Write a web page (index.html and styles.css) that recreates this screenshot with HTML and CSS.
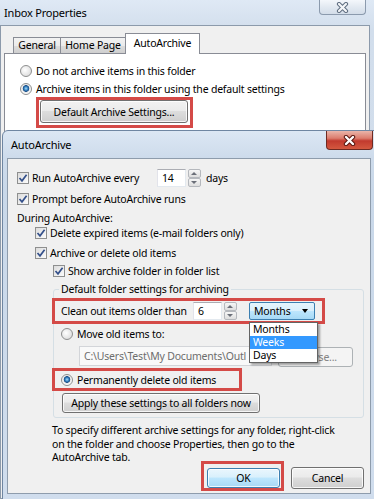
FILE: index.html
```html
<!DOCTYPE html>
<html lang="en">
<head>
	<meta charset="UTF-8">
	<title>AutoArchive</title>
	<link rel="stylesheet" href="styles.css">
</head>
<body>
	<div id="screen">
		<!-- Inbox Properties, behind -->
		<div class="win back">
			<div class="titlebar">
				<span class="title">Inbox Properties</span>
				<span class="close close-off">
					<svg width="13" height="11" viewBox="0 0 13 11"><path d="M3 2 L10 9 M10 2 L3 9" stroke="#5f6e80" stroke-width="4.2" stroke-linecap="round"/><path d="M3 2 L10 9 M10 2 L3 9" stroke="#f4f6f9" stroke-width="2.2" stroke-linecap="round"/></svg>
				</span>
			</div>
			<div class="client">
				<div class="tabs">
					<span class="tab tab-general">General</span>
					<span class="tab tab-home">Home Page</span>
					<span class="tab on">AutoArchive</span>
				</div>
				<div class="panel">
					<div class="row"><i class="radio"></i>Do not archive items in this folder</div>
					<div class="row mt4"><i class="radio on"></i>Archive items in this folder using the default settings</div>
					<div class="mark mark-default"><span class="btn btn-default">Default Archive Settings...</span></div>
				</div>
			</div>
		</div>

		<!-- AutoArchive dialog, in front -->
		<div class="win front">
			<div class="titlebar">
				<span class="title">AutoArchive</span>
				<span class="close close-red">
					<svg width="13" height="11" viewBox="0 0 13 11"><path d="M3 2 L10 9 M10 2 L3 9" stroke="#5a1710" stroke-width="4.4" stroke-linecap="round"/><path d="M3 2 L10 9 M10 2 L3 9" stroke="#ffffff" stroke-width="2.4" stroke-linecap="round"/></svg>
				</span>
			</div>
			<div class="client">
				<div class="row">
					<i class="check"><svg width="10" height="10" viewBox="0 0 10 10"><path d="M1.5 5 L4 7.8 L8.6 1.8" fill="none" stroke="#34508a" stroke-width="1.7"/></svg></i>
					<span class="lbl-run">Run AutoArchive every</span>
					<span class="field field-num">14</span>
					<span class="spin"><i class="up"></i><i class="dn"></i></span>
					<span class="unit">days</span>
				</div>
				<div class="row mt7">
					<i class="check"><svg width="10" height="10" viewBox="0 0 10 10"><path d="M1.5 5 L4 7.8 L8.6 1.8" fill="none" stroke="#34508a" stroke-width="1.7"/></svg></i>
					Prompt before AutoArchive runs
				</div>
				<div class="row mt5">During AutoArchive:</div>
				<div class="row mt1 in1">
					<i class="check"><svg width="10" height="10" viewBox="0 0 10 10"><path d="M1.5 5 L4 7.8 L8.6 1.8" fill="none" stroke="#34508a" stroke-width="1.7"/></svg></i>
					Delete expired items (e-mail folders only)
				</div>
				<div class="row mt6 in1">
					<i class="check"><svg width="10" height="10" viewBox="0 0 10 10"><path d="M1.5 5 L4 7.8 L8.6 1.8" fill="none" stroke="#34508a" stroke-width="1.7"/></svg></i>
					Archive or delete old items
				</div>
				<div class="row mt4 in2">
					<i class="check"><svg width="10" height="10" viewBox="0 0 10 10"><path d="M1.5 5 L4 7.8 L8.6 1.8" fill="none" stroke="#34508a" stroke-width="1.7"/></svg></i>
					Show archive folder in folder list
				</div>

				<fieldset class="group">
					<legend>Default folder settings for archiving</legend>
					<div class="mark mark-clean">
						<span class="lbl-clean">Clean out items older than</span>
						<span class="field field-num">6</span>
						<span class="spin"><i class="up"></i><i class="dn"></i></span>
						<span class="select">
							Months<i class="arrow"></i>
							<span class="list">
								<span>Months</span>
								<span class="sel">Weeks</span>
								<span>Days</span>
							</span>
						</span>
					</div>
					<div class="row mt3 pad7"><i class="radio"></i>Move old items to:</div>
					<div class="path">
						<span class="field field-off">C:\Users\Test\My Documents\Outl</span>
						<span class="btn btn-off btn-browse">Browse...</span>
					</div>
					<div class="mark mark-perm"><i class="radio on"></i>Permanently delete old items</div>
					<span class="btn btn-apply">Apply these settings to all folders now</span>
				</fieldset>

				<p class="note">To specify different archive settings for any folder, right-click<br>on the folder and choose Properties, then go to the<br>AutoArchive tab.</p>

				<div class="actions">
					<div class="mark mark-ok"><span class="btn btn-focus btn-ok">OK</span></div>
					<span class="btn btn-cancel">Cancel</span>
				</div>
			</div>
		</div>
	</div>
</body>
</html>
```

FILE: styles.css
```css
body {
	margin: 0;
	font-size: 10.5px;
	font-family: "Noto Sans", "DejaVu Sans", sans-serif;
	letter-spacing: -0.2px;
	color: #000;
}
i {
	font-style: normal;
}
#screen {
	position: relative;
	width: 374px;
	height: 499px;
	overflow: hidden;
	background: #d6e2ef;
}

/* windows */
.win {
	box-sizing: border-box;
}
.titlebar {
	display: flex;
	justify-content: space-between;
	align-items: flex-start;
}
.title {
	align-self: center;
	font-size: 11px;
}
.close {
	display: flex;
	align-items: center;
	justify-content: center;
	box-sizing: border-box;
	width: 47px;
	border-radius: 0 0 4px 4px;
}
.close-off {
	height: 15px;
	margin-right: 8px;
	border: 1px solid #8b9aad;
	border-top: 0;
	background: linear-gradient(#f4f7fb, #e2e9f1 50%, #d3dde9);
}
.close-red {
	height: 19px;
	margin-right: 6px;
	border: 1px solid #6e2a22;
	border-top: 0;
	background: linear-gradient(#eab5aa, #dc7d6e 40%, #c23a2e 55%, #d4583f);
}

.back {
	height: 499px;
	background: linear-gradient(#dfe9f5, #d2deec 30px, #cfdbea);
}
.back .titlebar {
	height: 25px;
}
.back .title {
	padding-left: 4px;
}
.back .client {
	height: 474px;
	margin-right: 4px;
	padding-top: 8px;
	box-sizing: border-box;
	border: 1px solid #8c9aab;
	background: #f0f0f0;
}

/* tabs */
.tabs {
	position: relative;
	z-index: 1;
	display: flex;
	align-items: flex-end;
	height: 20px;
	margin: 0 0 -1px 12px;
}
.tab {
	box-sizing: border-box;
	height: 16px;
	margin: 0 -1px 1px 0;
	border: 1px solid #898c95;
	border-bottom: 0;
	line-height: 15px;
	text-align: center;
	background: linear-gradient(#f2f2f2, #ebebeb 50%, #dddddd 50%, #cfcfcf);
}
.tab-general {
	width: 48px;
}
.tab-home {
	width: 66px;
}
.tab.on {
	width: 75px;
	height: 21px;
	margin-bottom: 0;
	line-height: 18px;
	background: #fff;
}
.panel {
	height: 420px;
	margin: 0 3px 0 3px;
	padding: 10px 0 0 15px;
	border: 1px solid #898c95;
	background: #fff;
}

/* dialog in front */
.front {
	position: absolute;
	top: 130px;
	left: 2px;
	width: 378px;
	height: 372px;
	border: 1px solid #6f86a2;
	border-radius: 6px 6px 0 0;
	background: linear-gradient(#dce7f4, #cddbeb 27px, #c9d8e9 60px, #d0dded);
}
.front .titlebar {
	height: 27px;
}
.front .title {
	padding-left: 8px;
}
.front .client {
	box-sizing: border-box;
	width: 364px;
	height: 336px;
	margin-left: 4px;
	padding: 12px 6px 0 9px;
	border: 1px solid #8e9cac;
	background: #f0f0f0;
}

/* rows */
.row {
	display: flex;
	align-items: center;
	height: 14px;
	white-space: nowrap;
}
.mt1 { margin-top: 1px; }
.mt3 { margin-top: 3px; }
.mt4 { margin-top: 4px; }
.mt5 { margin-top: 5px; }
.mt6 { margin-top: 6px; }
.mt7 { margin-top: 7px; }
.in1 { padding-left: 18px; }
.in2 { padding-left: 36px; }
.pad7 { padding-left: 7px; }

/* controls */
.check {
	display: inline-flex;
	align-items: center;
	justify-content: center;
	box-sizing: border-box;
	width: 12px;
	height: 12px;
	margin-right: 3px;
	border: 1px solid #8e8f8f;
	background: linear-gradient(135deg, #dcdcdc, #fbfbfb);
}
.radio {
	display: inline-block;
	box-sizing: border-box;
	width: 12px;
	height: 12px;
	margin-right: 4px;
	border: 1px solid #8e8f8f;
	border-radius: 50%;
	background: radial-gradient(circle at 40% 40%, #fff, #d4d4d4);
}
.radio.on {
	background: radial-gradient(circle at 50% 45%, #a9defb 0, #3b86c4 1.8px, #174c86 3px, #e6e6e6 3.6px, #fafafa 5px);
}
.field {
	display: flex;
	align-items: center;
	box-sizing: border-box;
	height: 18px;
	padding-left: 4px;
	border: 1px solid #abadb3;
	border-color: #abadb3 #e3e9ef #e3e9ef #e2e3ea;
	background: #fff;
}
.field-num {
	width: 29px;
}
.field-off {
	width: 193px;
	height: 20px;
	margin-left: 25px;
	overflow: hidden;
	white-space: nowrap;
	border-color: #d3d5d9;
	background: #f9f9f9;
	color: #6d6d6d;
}
.spin {
	display: flex;
	flex-direction: column;
	width: 13px;
	height: 18px;
	margin-left: 2px;
}
.spin i {
	position: relative;
	flex: 1;
	border: 1px solid #b5b8bd;
	border-radius: 2px;
	background: linear-gradient(#f6f6f6, #dedede);
}
.spin i::after {
	content: "";
	position: absolute;
	left: 2px;
	top: 2px;
	border-left: 3.5px solid transparent;
	border-right: 3.5px solid transparent;
}
.spin .up::after {
	border-bottom: 3px solid #6b6f78;
}
.spin .dn::after {
	border-top: 3px solid #6b6f78;
}
.unit {
	margin-left: 5px;
}
.lbl-run {
	width: 125px;
}
.lbl-clean {
	width: 132px;
}
.select {
	position: relative;
	display: flex;
	align-items: center;
	justify-content: space-between;
	box-sizing: border-box;
	width: 66px;
	height: 18px;
	margin-left: 12px;
	padding-left: 4px;
	border: 1px solid #3c7fb1;
	border-radius: 2px;
	background: linear-gradient(#e5f4fc, #d9effc 50%, #bee6fd 50%, #a7d9f5);
}
.arrow {
	margin-right: 6px;
	border-left: 3.5px solid transparent;
	border-right: 3.5px solid transparent;
	border-top: 4px solid #000;
}
.list {
	position: absolute;
	top: 19px;
	left: -1px;
	display: flex;
	flex-direction: column;
	width: 67px;
	border: 1px solid #646464;
	background: #fff;
	box-shadow: 2px 2px 2px rgba(0,0,0,.35);
	line-height: 13px;
}
.list span {
	padding-left: 3px;
}
.list .sel {
	background: #3399ff;
	color: #fff;
}

/* buttons */
.btn {
	display: flex;
	align-items: center;
	justify-content: center;
	box-sizing: border-box;
	border: 1px solid #707070;
	border-radius: 3px;
	background: linear-gradient(#f2f2f2, #ebebeb 45%, #dddddd 50%, #cfcfcf);
	box-shadow: inset 0 0 0 1px rgba(255,255,255,.8);
	white-space: nowrap;
}
.btn-focus {
	border-color: #3c7fb1;
	background: linear-gradient(#eaf6fd, #d9f0fc 45%, #bee6fd 50%, #a7d9f5);
}
.btn-off {
	border-color: #adb2b5;
	background: #f4f4f4;
	color: #838383;
	box-shadow: none;
}
.btn-default {
	width: 148px;
	height: 23px;
}
.btn-browse {
	width: 75px;
	height: 20px;
	margin: 1px 0 0 6px;
}
.btn-apply {
	width: 198px;
	height: 20px;
	margin: 2px 0 0 8px;
}
.btn-ok {
	width: 73px;
	height: 20px;
}
.btn-cancel {
	width: 73px;
	height: 22px;
	margin: 6px 0 0 7px;
}

/* red highlight boxes */
.mark {
	display: flex;
	align-items: center;
	box-sizing: border-box;
	border: 3px solid #d44a47;
	white-space: nowrap;
}
.mark-default {
	width: 157px;
	margin: 1px 0 0 16px;
	padding: 0 2px 2px 1px;
	align-items: flex-start;
}
.mark-clean {
	width: 273px;
	height: 26px;
	margin: 2px 0 0 -2px;
	padding-left: 6px;
}
.mark-perm {
	width: 190px;
	height: 23px;
	margin: 1px 0 0 -2px;
	padding-left: 6px;
}
.mark-ok {
	align-items: flex-start;
	padding: 4px 1px 0 3px;
	height: 30px;
}

/* group box */
.group {
	min-width: 0;
	margin: 4px 0 0 36px;
	padding: 0 0 4px 0;
	border: 1px solid #d5dfe5;
	border-radius: 3px;
}
.group legend {
	margin-left: 5px;
	padding: 0 2px;
	line-height: 14px;
}
.path {
	display: flex;
	align-items: flex-start;
	margin-top: 5px;
}
.note {
	margin: 6px 0 0 35px;
	line-height: 13.5px;
	white-space: nowrap;
}
.actions {
	display: flex;
	justify-content: flex-end;
	align-items: flex-start;
	margin-top: -4px;
}
```
